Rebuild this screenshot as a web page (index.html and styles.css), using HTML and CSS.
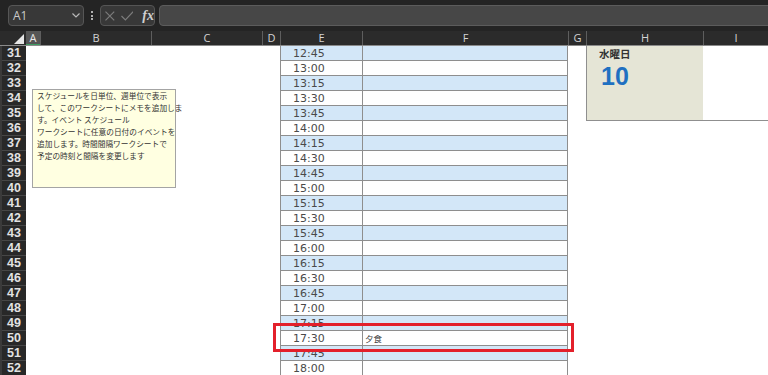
FILE: index.html
```html
<!DOCTYPE html>
<html lang="ja">
<head>
<meta charset="utf-8">
<title>Sheet</title>
<link rel="stylesheet" href="styles.css">
</head>
<body>
<div class="app">
  <div class="toolbar">
    <div class="namebox">
      <span class="ref">A1</span>
      <svg class="chev" width="8" height="5" viewBox="0 0 8 5"><polyline points="0.5,0.5 4,4 7.5,0.5" fill="none" stroke="#b8b8b8" stroke-width="1.2"/></svg>
    </div>
    <div class="dots"><i></i><i></i><i></i></div>
    <div class="fxbox">
      <svg width="10" height="10" viewBox="0 0 10 10"><path d="M0.5 0.5 L9.5 9.5 M9.5 0.5 L0.5 9.5" stroke="#7c7c7c" stroke-width="1.2" fill="none"/></svg>
      <svg width="13" height="10" viewBox="0 0 13 10"><polyline points="0.5,5 4.5,9 12.5,0.5" stroke="#7c7c7c" stroke-width="1.2" fill="none"/></svg>
      <span class="fx">fx</span>
    </div>
    <div class="formula"></div>
  </div>

  <div class="colheads">
    <div class="corner"><span class="tri"></span></div>
    <div class="ch sel">A</div>
    <div class="ch sep">B</div>
    <div class="ch sep">C</div>
    <div class="ch sep">D</div>
    <div class="ch sep">E</div>
    <div class="ch sep">F</div>
    <div class="ch sep">G</div>
    <div class="ch sep">H</div>
    <div class="ch sep grow">I</div>
  </div>

  <div class="sheet">
    <div class="rowheads">
      <div>31</div><div>32</div><div>33</div><div>34</div><div>35</div><div>36</div>
      <div>37</div><div>38</div><div>39</div><div>40</div><div>41</div><div>42</div>
      <div>43</div><div>44</div><div>45</div><div>46</div><div>47</div><div>48</div>
      <div>49</div><div>50</div><div>51</div><div>52</div>
    </div>
    <div class="grid">
      <div class="panel">
        <div class="day">
          <div class="dow">水曜日</div>
          <div class="date">10</div>
        </div>
      </div>

      <div class="e alt">12:45</div><div class="f alt"></div>
      <div class="e">13:00</div><div class="f"></div>
      <div class="e alt">13:15</div><div class="f alt"></div>
      <div class="e">13:30</div><div class="f"></div>
      <div class="e alt">13:45</div><div class="f alt"></div>
      <div class="e">14:00</div><div class="f"></div>
      <div class="e alt">14:15</div><div class="f alt"></div>
      <div class="e">14:30</div><div class="f"></div>
      <div class="e alt">14:45</div><div class="f alt"></div>
      <div class="e">15:00</div><div class="f"></div>
      <div class="e alt">15:15</div><div class="f alt"></div>
      <div class="e">15:30</div><div class="f"></div>
      <div class="e alt">15:45</div><div class="f alt"></div>
      <div class="e">16:00</div><div class="f"></div>
      <div class="e alt">16:15</div><div class="f alt"></div>
      <div class="e">16:30</div><div class="f"></div>
      <div class="e alt">16:45</div><div class="f alt"></div>
      <div class="e">17:00</div><div class="f"></div>
      <div class="e alt">17:15</div><div class="f alt"></div>
      <div class="e">17:30</div><div class="f">夕食</div>
      <div class="e alt">17:45</div><div class="f alt"></div>
      <div class="e">18:00</div><div class="f"></div>

      <div class="note">スケジュールを日単位、週単位で表示<br>して、このワークシートにメモを追加しま<br>す。イベント スケジュール<br>ワークシートに任意の日付のイベントを<br>追加します。時間間隔ワークシートで<br>予定の時刻と間隔を変更します</div>

      <div class="highlight"></div>
    </div>
  </div>
</div>
</body>
</html>
```

FILE: styles.css
```css
* { box-sizing: border-box; }
html, body { margin: 0; padding: 0; }
body {
  width: 768px;
  height: 375px;
  overflow: hidden;
  background: #ffffff;
  font-family: "Open Sans", "Noto Sans", sans-serif;
}
.app { width: 768px; height: 375px; display: flex; flex-direction: column; }

/* formula bar */
.toolbar {
  height: 31px;
  flex: none;
  background: #242424;
  display: flex;
  align-items: flex-start;
  padding: 5px 0 0 8px;
}
.namebox {
  width: 76px;
  height: 21px;
  border: 1px solid #565656;
  border-radius: 4px;
  background: #383838;
  display: flex;
  align-items: center;
  justify-content: space-between;
  padding: 0 3px 0 4px;
}
.ref { font-size: 12px; color: #c8c8c8; line-height: 19px; }
.chev { display: block; }
.dots {
  width: 16px;
  height: 21px;
  display: flex;
  flex-direction: column;
  align-items: center;
  justify-content: center;
  gap: 1.5px;
}
.dots i { display: block; width: 2px; height: 2px; background: #b0b0b0; }
.fxbox {
  width: 55px;
  height: 21px;
  border: 1px solid #555;
  border-radius: 4px;
  background: #383838;
  display: flex;
  align-items: center;
  gap: 6px;
  padding-left: 4px;
}
.fxbox svg { display: block; }
.fx {
  font-family: "Liberation Serif", "DejaVu Serif", serif;
  font-style: italic;
  font-weight: bold;
  font-size: 14px;
  color: #cfcfcf;
  margin-left: 3px;
  line-height: 14px;
}
.formula {
  flex: 1;
  height: 21px;
  margin-left: 4px;
  margin-right: -6px;
  border: 1px solid #5c5c5c;
  border-radius: 4px;
  background: #474747;
}

/* column headers */
.colheads {
  height: 15px;
  flex: none;
  display: flex;
  background: #2b2b2b;
  border-bottom: 1px solid #8a8a8a;
}
.corner { width: 26px; flex: none; position: relative; }
.tri {
  position: absolute;
  left: 14px;
  top: 3px;
  width: 0;
  height: 0;
  border-left: 10px solid transparent;
  border-bottom: 10px solid #e6e6e6;
}
.ch {
  flex: none;
  font-size: 11px;
  line-height: 14px;
  color: #d4d4d4;
  text-align: center;
}
.ch.sep { border-left: 1px solid #5e5e5e; }
.ch.sel { width: 14px; background: #565656; color: #e8e8e8; box-shadow: inset 0 -1px 0 #3e9b61; }
.ch:nth-child(3) { width: 111px; }
.ch:nth-child(4) { width: 111px; }
.ch:nth-child(5) { width: 18px; }
.ch:nth-child(6) { width: 82px; }
.ch:nth-child(7) { width: 206px; }
.ch:nth-child(8) { width: 18px; }
.ch:nth-child(9) { width: 117px; }
.ch.grow { flex: 1; }

/* sheet */
.sheet { flex: 1; display: flex; min-height: 0; }
.rowheads {
  width: 26px;
  flex: none;
  background: #282828;
  border-left: 2px solid #3a3a3a;
}
.rowheads div {
  height: 15px;
  border-bottom: 1px solid #474747;
  font-family: "Liberation Sans", Arial, sans-serif;
  font-size: 12.5px;
  font-weight: 700;
  line-height: 14px;
  color: #e2e2e2;
  text-align: center;
}
.grid {
  flex: 1;
  position: relative;
  display: grid;
  grid-template-columns: 14px 111px 111px 18px 82px 206px 18px 117px 1fr;
  grid-auto-rows: 15px;
  align-content: start;
}
.e {
  grid-column: 5;
  border-left: 1px solid #8e8e8e;
  border-bottom: 1px solid #8e8e8e;
  padding: 1px 0 0 12px;
  font-family: "DejaVu Sans", sans-serif;
  font-size: 11px;
  line-height: 13px;
  color: #4a4a4a;
  background: #ffffff;
}
.f {
  grid-column: 6;
  border-left: 1px solid #8e8e8e;
  border-right: 1px solid #8e8e8e;
  border-bottom: 1px solid #8e8e8e;
  padding: 1px 0 0 2px;
  font-family: "Noto Sans CJK JP", sans-serif;
  font-size: 8.5px;
  line-height: 13px;
  color: #404040;
  background: #ffffff;
}
.alt { background: #d3e7f8; }

.panel {
  grid-column: 8 / 10;
  grid-row: 1 / 6;
  border-bottom: 1px solid #8f8f8f;
  display: flex;
}
.day {
  width: 117px;
  background: #e5e5d6;
  border-left: 1px solid #8f8f8f;
  padding: 2px 0 0 12px;
}
.dow {
  font-family: "Noto Sans CJK JP", sans-serif;
  font-weight: 700;
  font-size: 10.5px;
  line-height: 12px;
  color: #333333;
}
.date {
  margin-top: 4px;
  margin-left: 2px;
  font-family: "Liberation Sans", Arial, sans-serif;
  font-weight: 700;
  font-size: 25px;
  line-height: 25px;
  color: #1f70c1;
}

/* overlays */
.note {
  position: absolute;
  left: 6px;
  top: 43px;
  width: 144px;
  height: 99px;
  background: #ffffe1;
  border: 1px solid #a4a4a4;
  padding: 0 0 0 4px;
  font-family: "Noto Sans CJK JP", sans-serif;
  font-size: 7.7px;
  line-height: 11.9px;
  color: #333333;
  white-space: nowrap;
}
.highlight {
  position: absolute;
  left: 247px;
  top: 277px;
  width: 301px;
  height: 29px;
  border: 3px solid #e3202b;
}
```
